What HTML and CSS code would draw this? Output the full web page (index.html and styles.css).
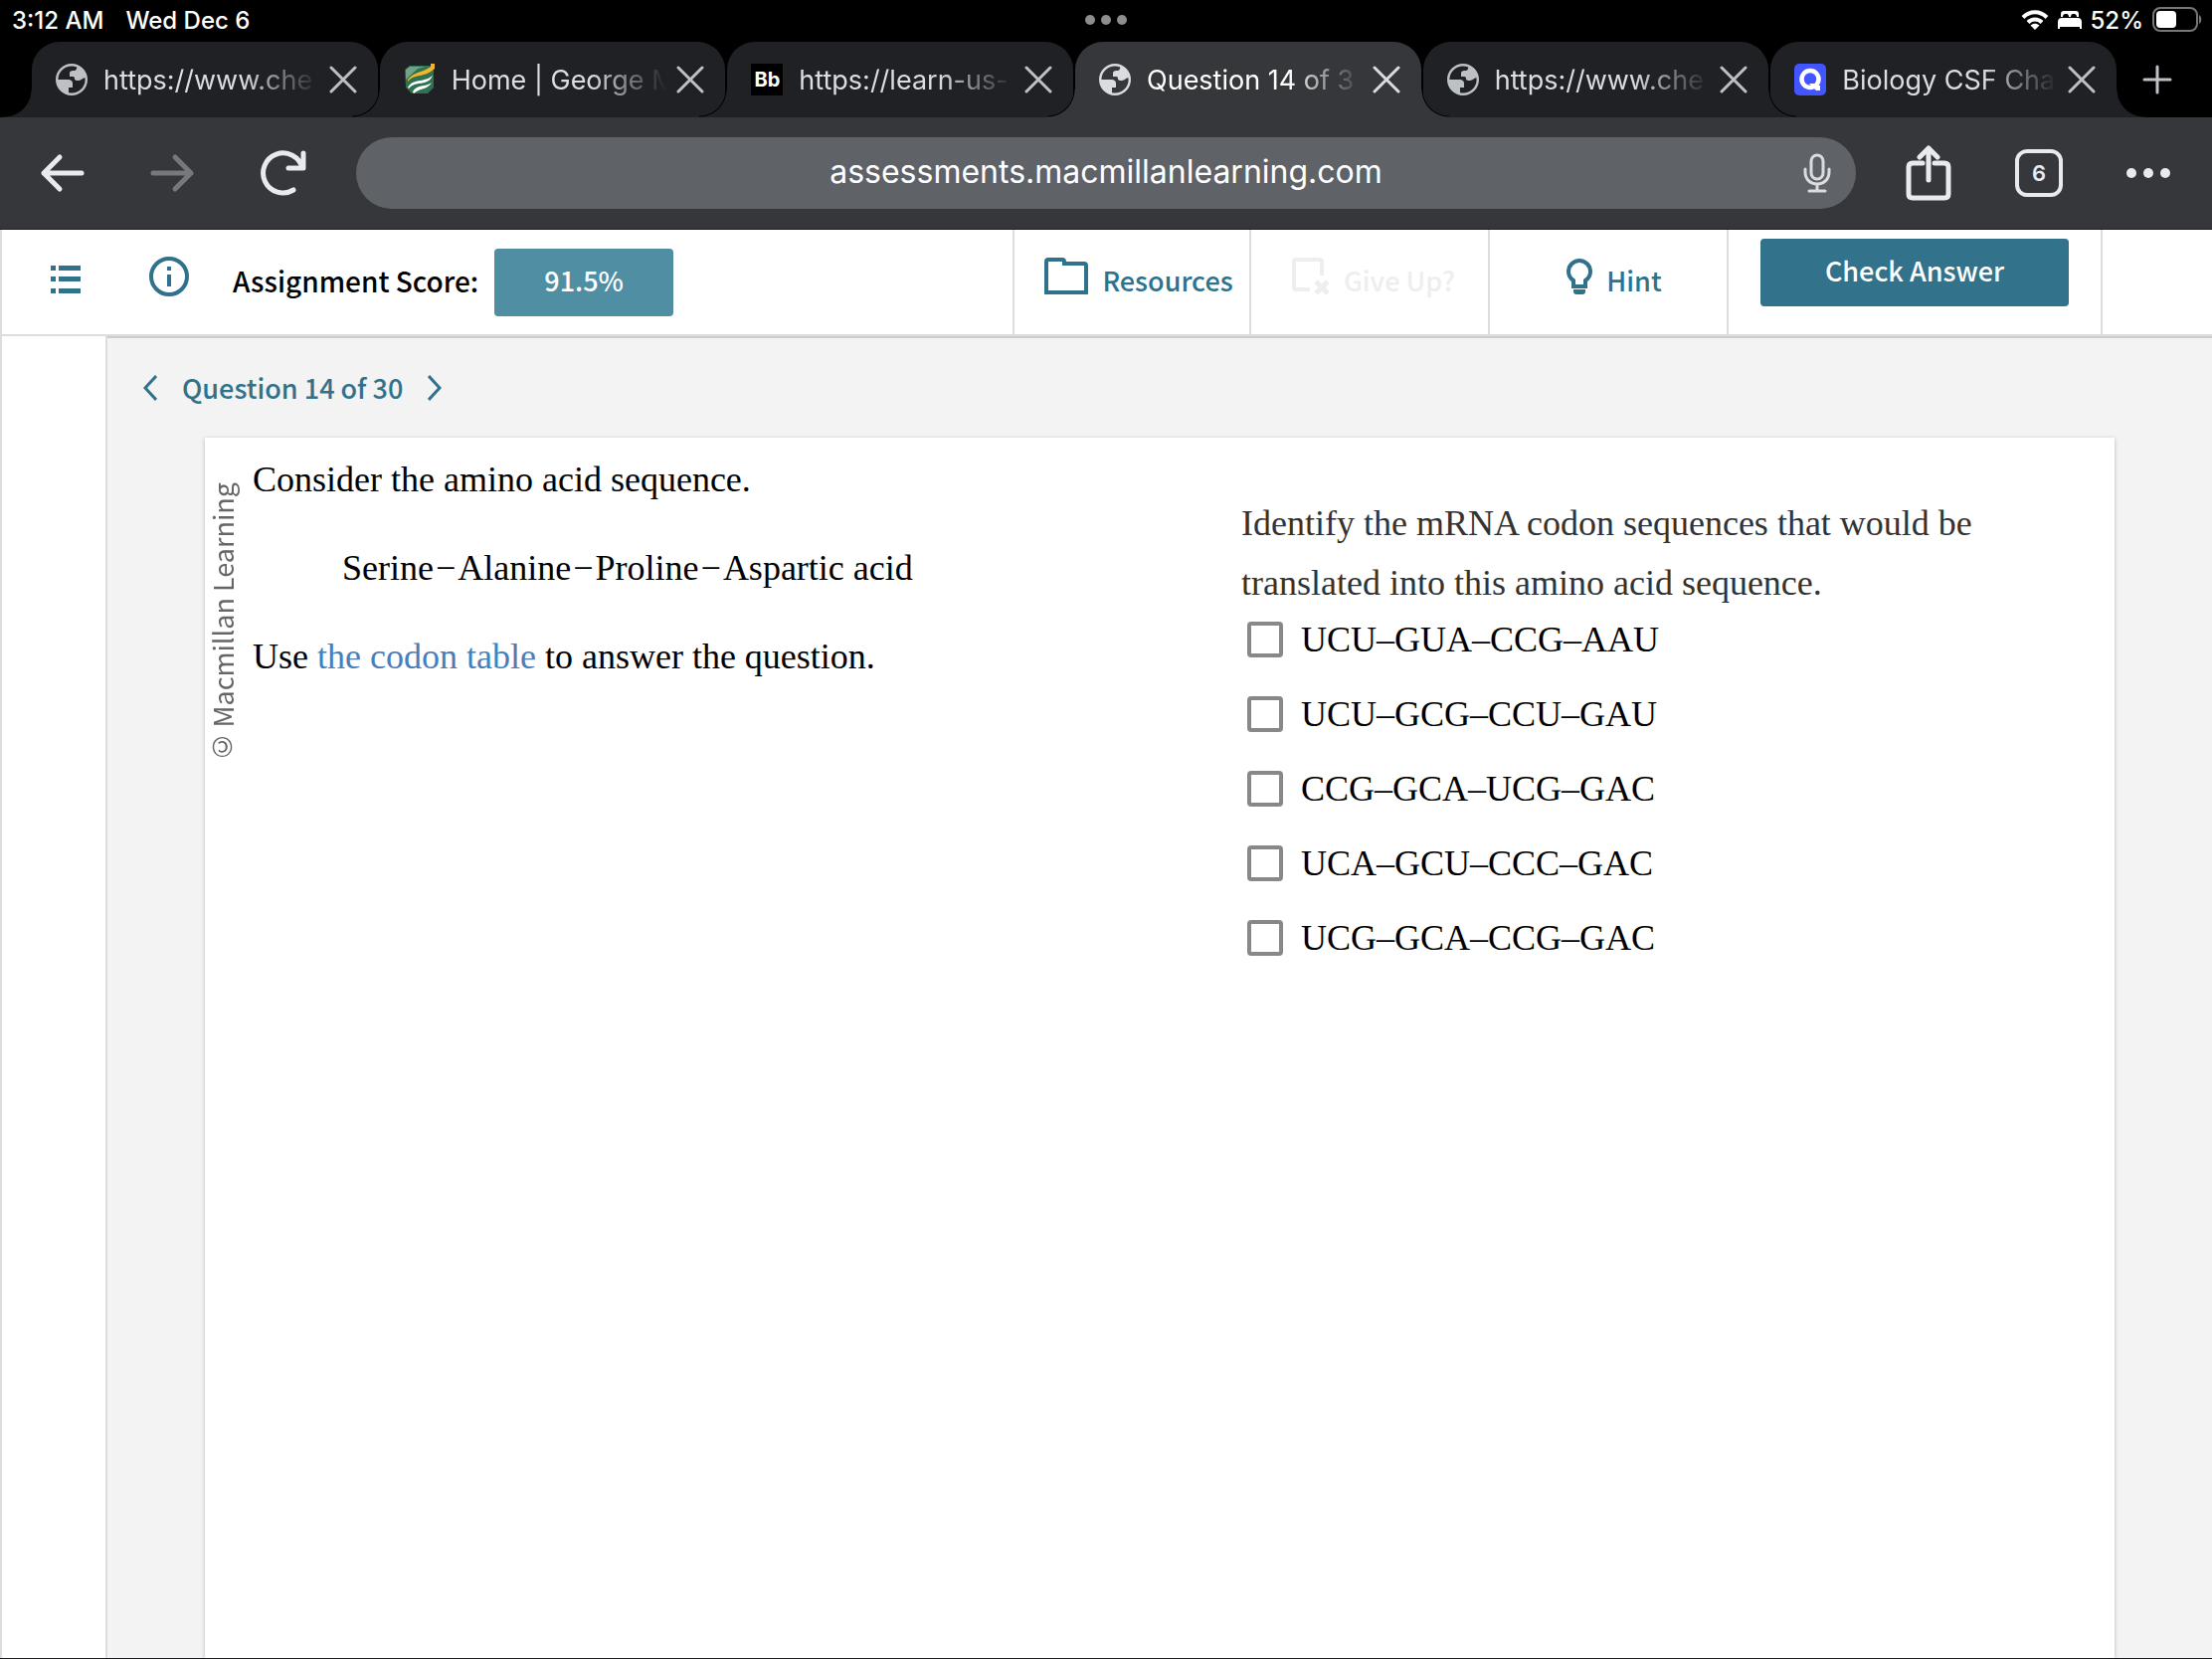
FILE: index.html
```html
<!DOCTYPE html>
<html lang="en">

<head>
    <meta charset="UTF-8">
    <meta name="viewport" content="width=device-width, initial-scale=1.0">
    <title>Question 14 of 30</title>
    <link rel="stylesheet" href="styles.css">
</head>

<body>
    <svg class="defs" aria-hidden="true">
        <symbol id="globe" viewBox="0 0 32 32">
            <circle cx="16" cy="16" r="14.8" fill="none" stroke="currentColor" stroke-width="2.4" />
            <path fill="currentColor" d="M1 16H12c3 0 5 1 5 4v4h-4v6C6 29 1 23 1 16zM22 2c-1 1-.5 5-3 5-3 0-5 0-5 3v3h3c2 0 2 1 2 3 1 1 3 1 4 1 3 0 4-3 7-3C30 8 27 4 22 2z" />
        </symbol>
        <symbol id="cross" viewBox="0 0 28 28">
            <path d="M2 2L26 26M26 2L2 26" fill="none" stroke="currentColor" stroke-width="3" stroke-linecap="round" />
        </symbol>
    </svg>

    <div class="status">
        <span>3:12 AM</span>
        <span>Wed Dec 6</span>
        <button class="dots" aria-label="Window options"><i></i><i></i><i></i></button>
        <div class="status-right">
            <svg width="28" height="20" viewBox="0 0 28 20" fill="none" stroke="#fff" stroke-width="4">
                <path d="M2 7.5C9 .5 19 .5 26 7.5M7 12.5c4-4 10-4 14 0" />
                <path d="M14 20l-4.500-4.500c3-2.500 6-2.500 9 0z" fill="#fff" stroke="none" />
            </svg>
            <svg width="24" height="18" viewBox="0 0 24 18" fill="#fff">
                <path d="M3 6V3c0-2 1-3 3-3h12c2 0 3 1 3 3v3h-2c0-2-1-3-2.500-3h-1.500c-1 0-2 1-2 3h-2c0-2-1-3-2-3H7.500C6 3 5 4 5 6zM0 18v-7c0-2 1-4 4-4h16c3 0 4 2 4 4v7h-2v-2H2v2z" />
            </svg>
            <span>52%</span>
            <svg width="50" height="26" viewBox="0 0 50 26">
                <rect x="1" y="1" width="44" height="23" rx="7" fill="none" stroke="#777" stroke-width="2" />
                <rect x="4" y="4" width="20" height="17" rx="4" fill="#fff" />
                <path d="M47 8c3 1 3 8 0 9z" fill="#777" />
            </svg>
        </div>
    </div>

    <div class="tabs">
        <div class="tab left">
            <svg class="favicon"><use href="#globe" /></svg>
            <span class="tab-title">https://www.che</span>
            <button class="close" aria-label="Close tab"><svg><use href="#cross" /></svg></button>
        </div>
        <div class="tab left">
            <svg class="favicon" viewBox="0 0 32 32">
                <path d="M1 6l5-4h20l4 5v17l-6 6H8l-6-6z" fill="#2f7250" />
                <path d="M2 16L14 5l8-2H6L2 6z" fill="#6fa287" />
                <path d="M4 16C10 8 19 9 27 3V0h4v5C22 14 10 10 4 18z" fill="#f2b52d" />
                <path d="M4 24c6-10 15-4 25-12-6 12-16 4-24 13zM9 28c5-8 12-4 19-9-5 8-12 5-18 11z" fill="#fff" />
            </svg>
            <span class="tab-title">Home | George M</span>
            <button class="close" aria-label="Close tab"><svg><use href="#cross" /></svg></button>
        </div>
        <div class="tab left">
            <span class="favicon bb">Bb</span>
            <span class="tab-title">https://learn-us-</span>
            <button class="close" aria-label="Close tab"><svg><use href="#cross" /></svg></button>
        </div>
        <div class="tab active">
            <svg class="favicon"><use href="#globe" /></svg>
            <span class="tab-title">Question 14 of 3</span>
            <button class="close" aria-label="Close tab"><svg><use href="#cross" /></svg></button>
        </div>
        <div class="tab right next">
            <svg class="favicon"><use href="#globe" /></svg>
            <span class="tab-title">https://www.che</span>
            <button class="close" aria-label="Close tab"><svg><use href="#cross" /></svg></button>
        </div>
        <div class="tab right">
            <svg class="favicon" viewBox="0 0 32 32">
                <rect width="32" height="32" rx="5" fill="#4255ff" />
                <circle cx="16" cy="15.500" r="8.500" fill="none" stroke="#fff" stroke-width="4.500" />
                <path d="M15 20h5l2 2h4v5h-4z" fill="#fff" />
            </svg>
            <span class="tab-title">Biology CSF Cha</span>
            <button class="close" aria-label="Close tab"><svg><use href="#cross" /></svg></button>
        </div>
        <button class="new-tab" aria-label="New tab">
            <svg width="30" height="30" viewBox="0 0 30 30" stroke="#bdc1c6" stroke-width="3" stroke-linecap="round"><path d="M15 2v26M2 15h26" /></svg>
        </button>
    </div>

    <div class="toolbar">
        <button aria-label="Back">
            <svg width="46" height="40" viewBox="0 0 46 40"><path d="M20 4L4 20l16 16M4 20h38" /></svg>
        </button>
        <button aria-label="Forward" disabled>
            <svg width="46" height="40" viewBox="0 0 46 40"><path d="M26 4l16 16-16 16M42 20H4" /></svg>
        </button>
        <button aria-label="Reload">
            <svg width="48" height="48" viewBox="0 0 48 48"><path d="M35 41A20 20 0 1 1 44 19M45 4v15H30" /></svg>
        </button>
        <div class="address">
            <input type="text" value="assessments.macmillanlearning.com" aria-label="Address">
            <button aria-label="Voice search">
                <svg width="28" height="40" viewBox="0 0 28 40"><rect x="8" y="2" width="12" height="24" rx="6" /><path d="M2 16v3c0 7 5 12 12 12s12-5 12-12v-3M14 31v7M6 38h16" /></svg>
            </button>
        </div>
        <button aria-label="Share">
            <svg width="46" height="56" viewBox="0 0 46 56"><path d="M17 18H7q-4 0-4 4v27q0 4 4 4h32q4 0 4-4V22q0-4-4-4H29M23 35V3M14 12l9-9 9 9" /></svg>
        </button>
        <button class="tab-count" aria-label="Show 6 tabs">6</button>
        <button class="dots" aria-label="Menu"><i></i><i></i><i></i></button>
    </div>

    <div class="page">
        <header class="header">
            <button class="menu" aria-label="Table of contents">
                <svg width="30" height="30" viewBox="0 0 30 30" fill="#30718b"><path d="M0 1h5v5H0zM8 1h22v5H8zM0 12h5v5H0zM8 12h22v5H8zM0 24h5v5H0zM8 24h22v5H8z" /></svg>
            </button>
            <button class="info" aria-label="Assignment information">
                <svg width="40" height="40" viewBox="0 0 40 40"><circle cx="20" cy="20" r="18" fill="none" stroke="#30718b" stroke-width="4" /><path d="M18 10h4v4h-4zM18 18h4v12h-4z" fill="#30718b" /></svg>
            </button>
            <div class="score">
                <span class="score-label">Assignment Score:</span>
                <span class="score-value">91.5%</span>
            </div>
            <button class="action">
                <svg width="44" height="37" viewBox="0 0 44 37" fill="none" stroke="#30718b" stroke-width="4"><path d="M2 35V4q0-2 2-2h14q2 0 2 2v2h20q2 0 2 2v27z" /></svg>
                <span>Resources</span>
            </button>
            <button class="action" disabled>
                <svg width="38" height="38" viewBox="0 0 38 38" fill="none" stroke="#eee"><path d="M30 18V4q0-2-2-2H4q-2 0-2 2v26q0 2 2 2h14" stroke-width="4" /><path d="M24 24l12 12M36 24L24 36" stroke-width="5" /></svg>
                <span>Give Up?</span>
            </button>
            <button class="action">
                <svg width="26" height="36" viewBox="0 0 26 36" fill="none" stroke="#30718b" stroke-width="4"><path d="M7 28v-6c-3-2-5-5-5-9C2 7 7 2 13 2s11 5 11 11c0 4-2 7-5 9v6z" /><path d="M7 31h12v2q0 3-3 3h-6q-3 0-3-3z" fill="#30718b" stroke="none" /></svg>
                <span>Hint</span>
            </button>
            <div class="check-cell"><button class="check">Check Answer</button></div>
            <div class="header-end"></div>
        </header>
        <div class="body">
            <aside class="sidebar"></aside>
            <main class="main">
                <nav class="question-nav">
                    <a href="#prev" aria-label="Previous question"><svg width="14" height="26" viewBox="0 0 14 26"><path d="M13 1L2 13l11 12" /></svg></a>
                    <a href="#question">Question 14 of 30</a>
                    <a href="#next" aria-label="Next question"><svg width="14" height="26" viewBox="0 0 14 26"><path d="M1 1l11 12L1 25" /></svg></a>
                </nav>
                <div class="card">
                    <p class="copyright">© Macmillan Learning</p>
                    <section class="prompt">
                        <p>Consider the amino acid sequence.</p>
                        <p class="sequence">Serine<span class="bond">−</span>Alanine<span class="bond">−</span>Proline<span class="bond">−</span>Aspartic acid</p>
                        <p>Use <a href="#codons">the codon table</a> to answer the question.</p>
                    </section>
                    <fieldset class="answers">
                        <legend>Identify the mRNA codon sequences that would be translated into this amino acid sequence.</legend>
                        <label><input type="checkbox"> UCU–GUA–CCG–AAU</label>
                        <label><input type="checkbox"> UCU–GCG–CCU–GAU</label>
                        <label><input type="checkbox"> CCG–GCA–UCG–GAC</label>
                        <label><input type="checkbox"> UCA–GCU–CCC–GAC</label>
                        <label><input type="checkbox"> UCG–GCA–CCG–GAC</label>
                    </fieldset>
                </div>
            </main>
        </div>
    </div>
</body>

</html>
```
FILE: styles.css
```css
* {
    box-sizing: border-box;
}

body {
    margin: 0;
    min-height: 100vh;
    display: flex;
    flex-direction: column;
    background-color: #fff;
    border-bottom: 1px solid #1c1c1e;
    font-family: Inter, "Liberation Sans", sans-serif;
}

button {
    padding: 0;
    border: 0;
    background: none;
    color: inherit;
    font: inherit;
}

a {
    text-decoration: none;
}

svg {
    display: block;
    flex: none;
}

.defs {
    position: absolute;
    width: 0;
    height: 0;
}

.dots {
    display: flex;
    gap: 7px;
}

.dots i {
    width: 10px;
    height: 10px;
    border-radius: 50%;
    background-color: currentColor;
}

/* status bar */
.status {
    position: relative;
    display: flex;
    align-items: center;
    gap: 22px;
    height: 42px;
    padding: 0 10px 2px 12px;
    background-color: #000;
    color: #fff;
    font-size: 24px;
    font-weight: 500;
}

.status .dots {
    position: absolute;
    left: 50%;
    margin-left: -21px;
    gap: 6px;
    color: #8e8e8e;
}

.status-right {
    display: flex;
    align-items: center;
    gap: 9px;
    margin-left: auto;
}

/* tabs */
.tabs {
    display: flex;
    gap: 2px;
    height: 76px;
    padding-left: 32px;
    background-color: #000;
}

.tab {
    --tab: #202124;
    position: relative;
    flex: 1;
    min-width: 0;
    display: flex;
    align-items: center;
    padding: 0 21px 0 24px;
    border-radius: 28px 28px 0 0;
    background-color: var(--tab);
    color: #dcdde0;
    font-size: 27px;
}

.tab.active {
    --tab: #36373a;
    z-index: 3;
    color: #fff;
}

.tab.next {
    z-index: 2;
}

/* flared bottom corners */
.tab.left::before,
.tab.active::before,
.tab.active::after,
.tab.right::after {
    content: "";
    position: absolute;
    bottom: 0;
    width: 28px;
    height: 28px;
}

.tab::before {
    right: 100%;
    background: radial-gradient(circle at 0 0, transparent 26px, #000 27px, var(--tab) 28px);
}

.tab::after {
    left: 100%;
    background: radial-gradient(circle at 100% 0, transparent 26px, #000 27px, var(--tab) 28px);
}

.favicon {
    flex: none;
    width: 32px;
    height: 32px;
    color: #bdc1c6;
}

.active .favicon,
.active .close {
    color: #dadce0;
}

.bb {
    background-color: #000;
    color: #fff;
    font-size: 20px;
    font-weight: 700;
    line-height: 32px;
    text-align: center;
}

.tab-title {
    flex: 1;
    margin: 0 10px 0 16px;
    overflow: hidden;
    white-space: nowrap;
    -webkit-mask-image: linear-gradient(to right, #000 65%, transparent);
    mask-image: linear-gradient(to right, #000 65%, transparent);
}

.close {
    color: #bdc1c6;
}

.close svg {
    width: 28px;
    height: 28px;
}

.new-tab {
    width: 94px;
    padding-left: 24px;
}

/* toolbar */
.toolbar {
    display: flex;
    align-items: center;
    height: 113px;
    padding: 0 42px 0 40px;
    background-color: #36373a;
    border-bottom: 1px solid #1c1a20;
    color: #e8eaed;
}

.toolbar svg {
    fill: none;
    stroke: currentColor;
    stroke-width: 5;
    stroke-linecap: round;
    stroke-linejoin: round;
}

.toolbar > button {
    margin-right: 64px;
}

.toolbar > button:disabled {
    color: #77787b;
}

.toolbar > button:nth-child(3) {
    margin-right: 50px;
}

.toolbar > button:last-child {
    margin-right: 0;
}

.address {
    flex: 1;
    display: grid;
    grid-template-columns: 1fr 28px;
    align-items: center;
    height: 72px;
    margin-right: 50px;
    padding: 0 25px 0 53px;
    border-radius: 36px;
    background-color: #5f6267;
}

.address input {
    width: 100%;
    padding: 0 0 4px;
    border: 0;
    outline: 0;
    background: none;
    color: #fff;
    font: 32px Inter, "Liberation Sans", sans-serif;
    text-align: center;
}

.address svg {
    stroke-width: 3;
    color: #dadce0;
}

.toolbar > .tab-count {
    width: 48px;
    height: 48px;
    border: 4px solid #e8eaed;
    border-radius: 12px;
    font-size: 22px;
    font-weight: 600;
}

/* page */
.page {
    flex: 1;
    display: flex;
    flex-direction: column;
    border-left: 2px solid #ddd;
    font-family: "Noto Sans CJK SC", "Open Sans", sans-serif;
    font-size: 27px;
    font-weight: 500;
    line-height: 40px;
}

.header {
    display: flex;
    height: 107px;
    border-bottom: 2px solid #ddd;
}

.menu {
    padding: 0 49px 6px;
}

.info {
    padding: 0 44px 12px 20px;
}

.score {
    flex: 1;
    display: flex;
    align-items: center;
    gap: 16px;
}

.score-label {
    padding-bottom: 4px;
    font-size: 28px;
}

.score-value {
    width: 180px;
    padding: 12px 14px 16px;
    border-radius: 4px;
    background-color: #4f8ea3;
    color: #fff;
    text-align: center;
}

.action,
.check-cell,
.header-end {
    border-left: 2px solid #ddd;
}

.action {
    display: flex;
    align-items: center;
    justify-content: center;
    gap: 14px;
    width: 240px;
    padding-left: 12px;
    color: #30718b;
}

.score + .action {
    width: 238px;
    padding-left: 14px;
}

.action svg {
    margin-bottom: 12px;
}

.action span {
    padding-bottom: 4px;
}

.action:disabled {
    padding-left: 8px;
    color: #eee;
}

.check-cell {
    width: 376px;
    padding: 9px 32px;
}

.check {
    width: 100%;
    padding: 12px 14px 16px;
    border-radius: 4px;
    background-color: #33728b;
    color: #fff;
}

.header-end {
    width: 112px;
}

.body {
    flex: 1;
    display: flex;
}

.sidebar {
    width: 106px;
    border-right: 2px solid #ddd;
}

.main {
    flex: 1;
    display: flex;
    flex-direction: column;
    padding: 0 98px;
    border-top: 2px solid #ccc;
    background-color: #f3f3f3;
}

.question-nav {
    display: flex;
    align-items: center;
    gap: 25px;
    height: 100px;
    margin-left: -62px;
}

.question-nav a {
    color: #30718b;
}

.question-nav svg {
    fill: none;
    stroke: #30718b;
    stroke-width: 3;
}

.card {
    flex: 1;
    display: grid;
    grid-template-columns: 48px 1fr 878px;
    align-items: start;
    background-color: #fff;
    box-shadow: 0 1px 4px rgba(0, 0, 0, .25);
    font-family: "Liberation Serif", serif;
    font-size: 36px;
    font-weight: 400;
    line-height: 60px;
}

.card p {
    margin: 0;
}

.card .copyright {
    margin-top: 45px;
    color: #666;
    font-family: "Noto Sans CJK SC", "Open Sans", sans-serif;
    font-size: 27px;
    line-height: 36px;
    writing-mode: vertical-rl;
    transform: rotate(180deg);
}

.prompt {
    display: grid;
    gap: 29px;
    padding-top: 12px;
}

.prompt a {
    color: #4a7ebb;
}

.prompt .sequence {
    padding-left: 90px;
}

.bond {
    margin: 0 2px;
}

.answers {
    min-width: 0;
    margin: 0;
    padding: 56px 80px 0 0;
    border: 0;
    color: #000;
}

.answers legend {
    float: left;
    padding: 0;
    color: #333;
}

.answers label {
    clear: both;
    display: flex;
    align-items: center;
    gap: 18px;
    margin-bottom: 21px;
    padding-left: 6px;
    line-height: 54px;
}

.answers input {
    appearance: none;
    width: 36px;
    height: 36px;
    margin: 0;
    border: 4px solid #888;
    border-radius: 4px;
    background-color: #fff;
}
```
